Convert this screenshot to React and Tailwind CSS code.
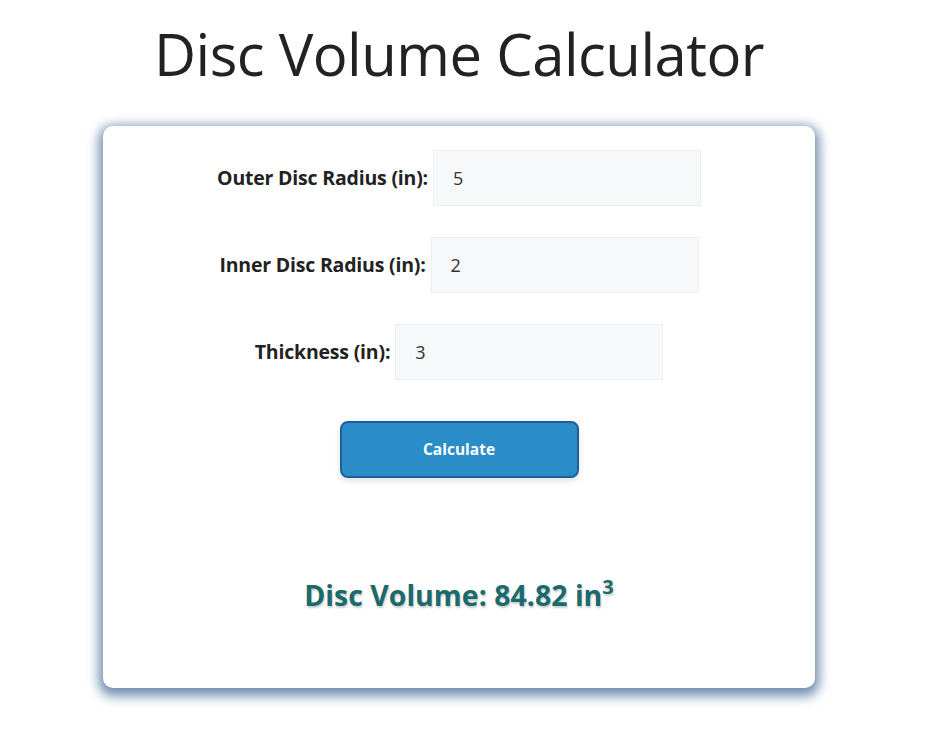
import React, { useState } from 'react';

export default function App() {
  const [outer, setOuter] = useState('5');
  const [inner, setInner] = useState('2');
  const [thickness, setThickness] = useState('3');
  const [volume, setVolume] = useState(84.82);

  const calculate = () => {
    const R = parseFloat(outer);
    const r = parseFloat(inner);
    const t = parseFloat(thickness);
    if (isNaN(R) || isNaN(r) || isNaN(t)) return;
    setVolume(Math.PI * (R * R - r * r) * t);
  };

  const fields = [
    { label: 'Outer Disc Radius (in):', value: outer, set: setOuter },
    { label: 'Inner Disc Radius (in):', value: inner, set: setInner },
    { label: 'Thickness (in):', value: thickness, set: setThickness },
  ];

  return (
    <div className="min-h-screen bg-white pr-4 font-['Open_Sans',sans-serif]">
      {/* Title */}
      <h1 className="pt-[14px] text-center text-[58px] leading-[80px] text-[#222] tracking-[-0.5px]">
        Disc Volume Calculator
      </h1>

      {/* Card */}
      <div className="mx-auto mt-[32px] w-[712px] h-[562px] rounded-[10px] bg-white pt-[24px] shadow-[0_4px_12px_4px_rgba(60,100,145,0.75)]">
        {fields.map((f) => (
          <div key={f.label} className="mb-[31px] flex items-center justify-center gap-[5px]">
            <label className="text-[19.5px] font-bold text-[#222] tracking-[-0.2px]">{f.label}</label>
            <input
              value={f.value}
              onChange={(e) => f.set(e.target.value)}
              className="h-[56px] w-[268px] border border-[#eceef1] bg-[#f7f8fa] pl-[19px] text-[18px] text-[#333] outline-none"
            />
          </div>
        ))}

        <div className="mt-[41px] flex justify-center">
          <button
            onClick={calculate}
            className="h-[57px] w-[239px] rounded-[8px] border-2 border-[#1c5f9c] bg-[#2a8dc8] text-[15.5px] font-bold text-white shadow-[0_3px_6px_rgba(0,0,0,0.12)]"
          >
            Calculate
          </button>
        </div>

        <p className="mt-[96px] text-center text-[28.5px] font-bold text-[#1b6a6c] [text-shadow:1px_2px_2px_rgba(0,0,0,0.2)]">
          Disc Volume: {volume.toFixed(2)} in<sup className="text-[20px] -top-[0.6em]">3</sup>
        </p>
      </div>
    </div>
  );
}
